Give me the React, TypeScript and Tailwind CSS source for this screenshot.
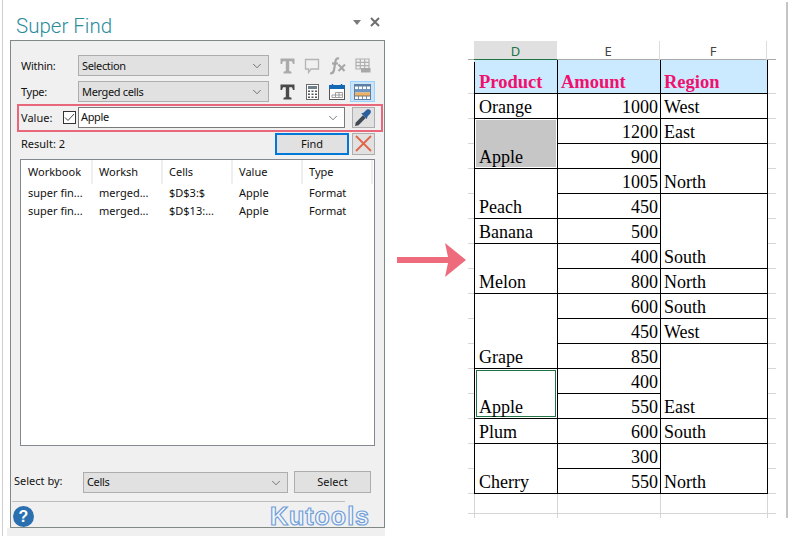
import { ChevronDown } from "lucide-react";

const uiFont = "font-['Noto_Sans','Open_Sans',sans-serif]";

const products = [
  { text: "Product", head: true },
  { text: "Orange" },
  { text: "Apple", span: "row-span-2", mark: "selected" },
  { text: "Peach", span: "row-span-2" },
  { text: "Banana" },
  { text: "Melon", span: "row-span-2" },
  { text: "Grape", span: "row-span-3" },
  { text: "Apple", span: "row-span-2", mark: "active" },
  { text: "Plum" },
  { text: "Cherry", span: "row-span-2" },
];

const amounts = [1000, 1200, 900, 1005, 450, 500, 400, 800, 600, 450, 850, 400, 550, 600, 300, 550];

const regions = [
  { text: "Region", head: true },
  { text: "West" },
  { text: "East" },
  { text: "North", span: "row-span-2" },
  { text: "South", span: "row-span-3" },
  { text: "North" },
  { text: "South" },
  { text: "West" },
  { text: "East", span: "row-span-3" },
  { text: "South" },
  { text: "North", span: "row-span-2" },
];

function Combo({ text, className }: { text: string; className: string }) {
  return (
    <div className={`flex h-[21px] items-center justify-between border border-[#adadad] bg-[#e1e1e1] pl-[3px] pr-[4px] pt-[1px] text-[11px] tracking-[-0.35px] text-[#111] ${className}`}>
      <span>{text}</span>
      <ChevronDown size={14} strokeWidth={1.1} className="text-[#333]" />
    </div>
  );
}

function TIcon({ color }: { color: string }) {
  return (
    <svg width="15" height="16" viewBox="0 0 15 16">
      <path d="M.5.5h14v5.500h-1.500L12 3.200H9.200v9.800l2.300.8V15.500h-8v-1.700l2.300-.8V3.200H3L2 6H.5z" fill={color} />
    </svg>
  );
}

function BubbleIcon() {
  return (
    <svg width="16" height="16" viewBox="0 0 16 16" fill="none" stroke="#b4b4b4" strokeWidth="1.300">
      <path d="M1.500 1.500h13v9.500H7l-2.500 3.500V11h-3z" />
    </svg>
  );
}

function FxIcon() {
  return (
    <svg width="17" height="18" viewBox="0 0 17 18" fill="none" stroke="#a6a6a6" strokeWidth="2.200">
      <path d="M10 1.500C7.500 1 6.800 2.500 6.400 4.500L5 13c-.4 2.500-1.500 3.500-3.800 3.300" />
      <path d="M3 6.500h6" />
      <path d="M9.500 7.500l6 6.500M16 7.500l-6.500 6.500" strokeWidth="2" />
    </svg>
  );
}

function SheetIcon() {
  return (
    <svg width="16" height="16" viewBox="0 0 16 16" fill="none">
      <path d="M1 1h13v10H1zM1 4.300h13M1 7.600h13M5.300 1v10M9.700 1v10" stroke="#b0b0b0" strokeWidth="1.200" />
      <rect x="6" y="10" width="9.500" height="4.500" fill="#a8a8a8" />
    </svg>
  );
}

function CalcIcon() {
  return (
    <svg width="13" height="16" viewBox="0 0 13 16">
      <rect x="0.500" y="0.500" width="12" height="15" fill="#fff" stroke="#6a6a6a" />
      <rect x="2" y="2" width="9" height="3" fill="#6e7f8c" />
      <path d="M2 6.500h2v1.500H2zM5.500 6.500h2v1.500h-2zM9 6.500h2v1.500H9zM2 9.500h2V11H2zM5.500 9.500h2V11h-2zM9 9.500h2V11H9zM2 12.500h2V14H2zM5.500 12.500h2V14h-2zM9 12.500h2V14H9z" fill="#555" />
    </svg>
  );
}

function CalendarIcon() {
  return (
    <svg width="16" height="16" viewBox="0 0 16 16">
      <rect x="0.500" y="1.500" width="15" height="14" fill="#fff" stroke="#555" />
      <rect x="0" y="1" width="16" height="4" fill="#1668b4" />
      <path d="M3.500 0v3M12.500 0v3" stroke="#1668b4" strokeWidth="1.500" />
      <path d="M6.500 8.500h7v5h-7zM6.500 11h7M10 8.500v5M3 11h3.500M3 11v2.500h3.500" fill="none" stroke="#888" strokeWidth="0.800" />
    </svg>
  );
}

function MergedIcon() {
  return (
    <svg width="17" height="16" viewBox="0 0 17 16">
      <rect x="0.500" y="0.500" width="16" height="15" fill="#fff" stroke="#5b7fa6" />
      <rect x="1" y="1" width="15" height="1.500" fill="#5b7fa6" />
      <path d="M4.500 2v3M8.500 2v3M12.500 2v3M4.500 12v3M8.500 12v3M12.500 12v3" stroke="#7b94ae" />
      <rect x="1" y="5" width="15" height="3.500" fill="#6d95bd" />
      <rect x="1" y="8.500" width="15" height="3.500" fill="#f0b163" />
      <path d="M1 12h15" stroke="#777" />
    </svg>
  );
}

function DropperIcon() {
  return (
    <svg width="19" height="19" viewBox="0 0 19 19">
      <path d="M1 18l.8-3.500L9 7.300l2.700 2.700-7.200 7.200z" fill="#3f4a55" />
      <path d="M7.300 5.500l2.500-1 1.500-1.500C12.800 1.200 14.800.7 16.200 2c1.300 1.300.8 3.300-1 4.800l-1.500 1.500-1 2.700z" fill="#2b5f9e" />
    </svg>
  );
}

function Dialog() {
  return (
    <div className={`ml-[2px] flex h-[536px] w-[383px] flex-col border-l border-[#cfcfcf] ${uiFont}`}>
      <div className="relative h-[40px] shrink-0 bg-white pl-[13px] pt-[12px] font-['Roboto',sans-serif] text-[20.500px] font-light leading-[28px] text-[#2b8c9c]">
        Super Find
        <span className="absolute left-[350px] top-[20px] h-0 w-0 border-x-[4.500px] border-t-[5px] border-x-transparent border-t-[#7a7a7a]" />
        <svg width="10" height="10" viewBox="0 0 10 10" className="absolute left-[367px] top-[17px]">
          <path d="M1 1l8 8M9 1l-8 8" stroke="#6f6f6f" strokeWidth="2" />
        </svg>
      </div>

      <div className="ml-[7px] flex h-[488px] w-[375px] shrink-0 flex-col border border-[#7f8a85] bg-[#f0f0f0] text-[#111]">
        <div className="ml-[10px] mt-[14px] flex h-[21px] items-center">
          <span className="w-[57px] pt-[1px] text-[11px] tracking-[-0.3px]">Within:</span>
          <Combo text="Selection" className="w-[191px]" />
          <div className="ml-[11px] flex w-[93px] items-center gap-[9px]">
            <TIcon color="#ababab" />
            <BubbleIcon />
            <FxIcon />
            <SheetIcon />
          </div>
        </div>

        <div className="ml-[10px] mt-[5px] flex h-[21px] items-center">
          <span className="w-[57px] pt-[1px] text-[11px] tracking-[-0.3px]">Type:</span>
          <Combo text="Merged cells" className="w-[191px]" />
          <div className="ml-[11px] flex items-center">
            <TIcon color="#4a4a4a" />
            <span className="ml-[11px] flex"><CalcIcon /></span>
            <span className="ml-[10px] flex"><CalendarIcon /></span>
            <span className="ml-[5px] flex h-[21px] w-[25px] items-center justify-center border border-[#99d1ff] bg-[#cce4f7]">
              <MergedIcon />
            </span>
          </div>
        </div>

        <div className="ml-[6px] mt-[2px] flex h-[28px] w-[366px] items-center border-2 border-[#e9677a] pl-[2px]">
          <span className="w-[42px] text-[11px]">Value:</span>
          <span className="flex h-[13px] w-[13px] items-center justify-center border border-[#333] bg-white">
            <svg width="11" height="9" viewBox="0 0 11 9" fill="none">
              <path d="M1 4.500l3 3 6-6.500" stroke="#444" strokeWidth="1" />
            </svg>
          </span>
          <div className="ml-[2px] flex h-[21px] w-[267px] items-center justify-between border border-[#7a7a7a] bg-white pl-[2px] pr-[4px] text-[11px] tracking-[-0.35px]">
            <span className="-mt-[1px]">Apple</span>
            <ChevronDown size={14} strokeWidth={1.1} className="text-[#333]" />
          </div>
          <span className="ml-[7px] flex h-[21px] w-[23px] items-center justify-center border border-[#adadad] bg-[#e1e1e1]">
            <DropperIcon />
          </span>
        </div>

        <div className="mt-[1px] flex h-[22px] items-center pl-[10px]">
          <span className="w-[254px] text-[11px]">Result: 2</span>
          <span className="flex h-[22px] w-[74px] items-center justify-center border-2 border-[#0078d7] bg-[#e1e1e1] text-[11px]">Find</span>
          <span className="ml-[3px] flex h-[22px] w-[23px] items-center justify-center border border-[#adadad] bg-[#e1e1e1]">
            <svg width="17" height="17" viewBox="0 0 17 17">
              <path d="M1 1l15 15M16 1L1 16" stroke="#e0654a" strokeWidth="1.800" />
            </svg>
          </span>
        </div>

        <div className="ml-[9px] mt-[4px] h-[288px] w-[355px] border border-[#828790] bg-white text-[11px]">
          <div className="grid h-[24px] grid-cols-[72px_70px_70px_70px_70px] items-center">
            {["Workbook", "Worksh", "Cells", "Value", "Type"].map((h, j) => (
              <span key={h} className={`flex h-[24px] items-center border-r-2 border-[#efefef] ${j === 0 ? "pl-[7px]" : "pl-[6px]"}`}>{h}</span>
            ))}
          </div>
          {[
            ["super fin...", "merged...", "$D$3:$", "Apple", "Format"],
            ["super fin...", "merged...", "$D$13:...", "Apple", "Format"],
          ].map((row, i) => (
            <div key={i} className="grid h-[18px] grid-cols-[72px_70px_70px_70px_70px] items-center">
              {row.map((c, j) => (
                <span key={j} className={j === 0 ? "pl-[7px]" : "pl-[6px]"}>{c}</span>
              ))}
            </div>
          ))}
        </div>

        <div className="mt-[25px] flex h-[22px] items-center pl-[3px]">
          <span className="w-[69px] -mt-[1px] text-[11px]">Select by:</span>
          <Combo text="Cells" className="w-[205px]" />
          <span className="ml-[6px] flex h-[22px] w-[77px] items-center justify-center border border-[#adadad] bg-[#e1e1e1] text-[11px]">Select</span>
        </div>

        <div className="ml-[1px] mt-[8px] h-px w-[333px] bg-[#bdbdbd]" />

        <div className="flex flex-1 items-start justify-between pl-[2px] pr-[14px] pt-[4px]">
          <span className="flex h-[21px] w-[21px] shrink-0 items-center justify-center rounded-full bg-[#2a6fb0] font-['Liberation_Sans',sans-serif] text-[16px] font-bold leading-none text-white">?</span>
          <span className="font-['Liberation_Sans',sans-serif] text-[25px] font-bold leading-[21px] tracking-[1px] text-[#f4f8fd] [-webkit-text-stroke:1.2px_#739fd9]">Kutools</span>
        </div>
      </div>
      <div className="ml-[4px] flex-1 bg-[#f0f0f0]" />
    </div>
  );
}

function Arrow() {
  return (
    <svg width="70" height="34" viewBox="0 0 70 34" className="ml-[12px] mt-[243px] shrink-0">
      <path d="M0 14h51L48 0l21 17-21 17 3-14H0z" fill="#ee6b7d" />
    </svg>
  );
}

function Cell({ text, span, head, mark, right, inset }: { text: string | number; span?: string; head?: boolean; mark?: string; right?: boolean; inset?: string }) {
  return (
    <div className={`min-h-0 border-b border-r border-black ${head ? "bg-[#cceaff]" : "bg-white"} ${span ?? ""}`}>
      <div
        className={`flex h-full items-end leading-[21px] ${right ? "justify-end pr-[2px]" : inset ?? "pl-[3px]"} ${
          mark === "selected" ? "m-[1px] !h-[calc(100%-2px)] bg-[#c6c6c6] !pl-[3px] !leading-[19px]" : ""
        } ${mark === "active" ? "m-[1px] !h-[calc(100%-2px)] border border-[#217346] !pl-[2px] !leading-[17px]" : ""} ${
          head ? "text-[18.500px] font-bold text-[#f0106e]" : "text-[18px] text-black"
        }`}
      >
        {text}
      </div>
    </div>
  );
}

function BlankColumns({ className }: { className: string }) {
  return (
    <div className={`grid w-[293px] grid-cols-[83px_103px_107px] border-l border-[#d6d6d6] ${className}`}>
      <span className="border-r border-[#d6d6d6]" />
      <span className="border-r border-[#d6d6d6]" />
      <span className="border-r border-[#d6d6d6]" />
    </div>
  );
}

function Sheet() {
  return (
    <div className="ml-[1px] mt-[41px] w-[308px] shrink-0 font-['Liberation_Serif',serif]">
      <div className={`ml-[6px] grid h-[18px] w-[293px] grid-cols-[83px_103px_107px] text-center text-[13px] leading-[21px] text-[#444] ${uiFont}`}>
        <span className="bg-[#e0e0e0] text-[#217346]">D</span>
        <span className="border-r border-[#dcdcdc]">E</span>
        <span className="border-r border-[#dcdcdc]">F</span>
      </div>
      <div className="h-[459px] bg-[linear-gradient(#fff,#fff),repeating-linear-gradient(to_bottom,#d6d6d6_0_1px,transparent_1px_25px)] bg-[length:100%_33px,100%_25px] bg-[position:0_0,0_9px] [background-repeat:no-repeat,repeat-y] px-[6px]">
        <div className="-mx-[6px] flex h-px bg-[#a8a8a8]">
          <span className="ml-[6px] w-[83px] bg-[#217346]" />
        </div>
        <div className="grid w-[293px] grid-flow-col grid-cols-[83px_103px_107px] grid-rows-[34px_repeat(16,25px)] border-l border-black">
          {products.map((p, i) => (
            <Cell key={i} {...p} inset="pl-[4px]" />
          ))}
          <Cell text="Amount" head />
          {amounts.map((a, i) => (
            <Cell key={i} text={a} right />
          ))}
          {regions.map((r, i) => (
            <Cell key={i} {...r} />
          ))}
        </div>
        <BlankColumns className="h-[19px]" />
        <div className="-mx-[6px] h-px bg-[#d6d6d6]" />
        <BlankColumns className="h-[4px]" />
      </div>
    </div>
  );
}

export default function App() {
  return (
    <div className="flex h-[537px] w-[788px] overflow-hidden bg-white">
      <Dialog />
      <Arrow />
      <Sheet />
      <div className="ml-[10px] mt-[2px] h-[516px] w-[2px] bg-[#c4c4c4]" />
    </div>
  );
}
